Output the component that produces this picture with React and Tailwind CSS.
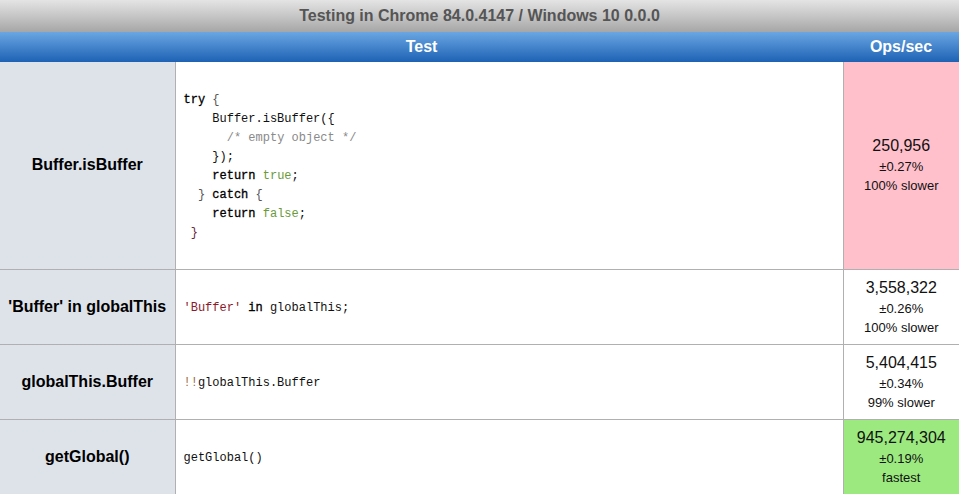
import React from "react";

const K = ({ children }) => <span className="text-black [-webkit-text-stroke:0.3px_black]">{children}</span>;
const P = ({ children }) => <span className="text-[#555]">{children}</span>;
const B = ({ children }) => <span className="text-[#6a9a3a]">{children}</span>;
const C = ({ children }) => <span className="text-[#8a8a8a]">{children}</span>;
const S = ({ children }) => <span className="text-[#8b1a2b]">{children}</span>;
const O = ({ children }) => <span className="text-[#9a6a3a]">{children}</span>;

function Code({ children }) {
  return (
    <pre className="m-0 pt-[4px] whitespace-pre text-[12px] leading-[19px] text-[#111] font-['Liberation_Mono',monospace]">
      {children}
    </pre>
  );
}

function Ops({ n, e, r }) {
  return (
    <div className="flex flex-col items-center">
      <div className="text-[16px] leading-[22px] text-[#111]">{n}</div>
      <div className="text-[13px] leading-[19px] text-[#111]">{e}</div>
      <div className="text-[13px] leading-[19px] text-[#111]">{r}</div>
    </div>
  );
}

const rows = [
  {
    label: "Buffer.isBuffer",
    h: "h-[207px]",
    code: (
      <Code>
        <K>try</K> <P>{"{"}</P>
        {"\n    Buffer.isBuffer({\n      "}
        <C>{"/* empty object */"}</C>
        {"\n    });\n    "}
        <K>return</K> <B>true</B>
        {";\n  "}
        <P>{"}"}</P> <K>catch</K> <P>{"{"}</P>
        {"\n    "}
        <K>return</K> <B>false</B>
        {";\n "}
        <span className="text-[#6a2a3a]">{"}"}</span>
      </Code>
    ),
    ops: { n: "250,956", e: "±0.27%", r: "100% slower" },
    bg: "bg-[#ffc0cb]",
  },
  {
    label: "'Buffer' in globalThis",
    h: "h-[75px]",
    code: (
      <Code>
        <S>'Buffer'</S> <K>in</K> globalThis;
      </Code>
    ),
    ops: { n: "3,558,322", e: "±0.26%", r: "100% slower" },
    bg: "bg-white",
  },
  {
    label: "globalThis.Buffer",
    h: "h-[75px]",
    code: (
      <Code>
        <O>!!</O>globalThis.Buffer
      </Code>
    ),
    ops: { n: "5,404,415", e: "±0.34%", r: "99% slower" },
    bg: "bg-white",
  },
  {
    label: "getGlobal()",
    h: "h-[75px]",
    code: <Code>getGlobal()</Code>,
    ops: { n: "945,274,304", e: "±0.19%", r: "fastest" },
    bg: "bg-[#9ce980]",
  },
];

export default function App() {
  return (
    <div className="w-[962px] h-[495px] overflow-hidden bg-white font-['Liberation_Sans',Arial,sans-serif]">
      <table className="w-[959px] border-collapse table-fixed">
        <colgroup>
          <col className="w-[175px]" />
          <col className="w-[668px]" />
          <col className="w-[116px]" />
        </colgroup>
        <thead>
          <tr>
            <th
              colSpan={3}
              className="h-[32px] p-0 text-center text-[16px] font-bold text-[#555] bg-gradient-to-b from-[#e4e4e4] via-[#c6c6c6] to-[#a6a6a6]"
            >
              Testing in Chrome 84.0.4147 / Windows 10 0.0.0
            </th>
          </tr>
          <tr>
            <th
              colSpan={2}
              className="h-[30px] p-0 text-center text-[16px] font-bold text-white bg-gradient-to-b from-[#6aa6e2] to-[#1c62b4]"
            >
              Test
            </th>
            <th className="h-[30px] p-0 text-center text-[16px] font-bold text-white bg-gradient-to-b from-[#6aa6e2] to-[#1c62b4]">
              Ops/sec
            </th>
          </tr>
        </thead>
        <tbody>
          {rows.map((r, i) => (
            <tr key={i} className={i > 0 ? "border-t border-[#b0b0b0]" : ""}>
              <td
                className={`${r.h} p-0 bg-[#dee3ea] border-r border-[#b0b0b0] text-center text-[16px] font-bold text-black`}
              >
                {r.label}
              </td>
              <td className={`${r.h} pl-[8px] pr-2 py-0 align-middle bg-white border-r border-[#b0b0b0]`}>
                {r.code}
              </td>
              <td className={`${r.h} p-0 align-middle ${r.bg}`}>
                <Ops {...r.ops} />
              </td>
            </tr>
          ))}
        </tbody>
      </table>
    </div>
  );
}
